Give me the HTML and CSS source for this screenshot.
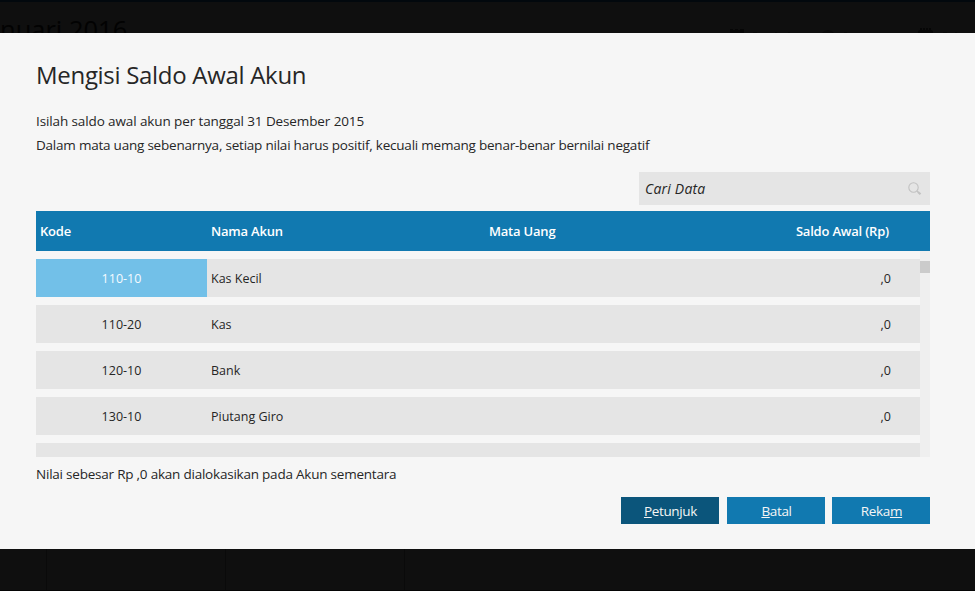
FILE: index.html
```html
<!DOCTYPE html>
<html lang="id">
<head>
    <meta charset="UTF-8">
    <meta name="viewport" content="width=device-width, initial-scale=1.0">
    <title>Mengisi Saldo Awal Akun</title>
    <link rel="stylesheet" href="styles.css">
</head>
<body>

<div id="backdrop">
    <div class="page-title">nuari 2016</div>
    <svg class="page-tools" width="245" height="8" viewBox="0 -3 245 8">
        <path d="M0 8V1h3v1h2V1h3v1h2V1h4v7z"/>
        <path class="faint" d="M23 4h4v2h-4zM45 4h2v2h-2zM58 4h2v2h-2zM92 5q6-6 12 0M114 4h3v2h-3z"/>
        <path d="M188 8V3l2-1V0h2v2h1V0h2v2h1V0h2v2h1V0h2v2l2 1v5z"/>
        <path class="faint" d="M213 4h4v2h-4zM225 4h2v2h-2z"/>
    </svg>
</div>

<div id="dialog">
    <h1>Mengisi Saldo Awal Akun</h1>
    <p class="info first">Isilah saldo awal akun per tanggal 31 Desember 2015</p>
    <p class="info second">Dalam mata uang sebenarnya, setiap nilai harus positif, kecuali memang benar-benar bernilai negatif</p>

    <div class="search">
        <span>Cari Data</span>
        <svg width="14" height="14" viewBox="0 0 14 14">
            <circle cx="5.5" cy="5.5" r="4.7"/>
            <path d="M9 9l1.5 1.5"/>
            <path class="handle" d="M10 10l2.5 2.3"/>
        </svg>
    </div>

    <div class="row head">
        <div class="kode">Kode</div>
        <div class="nama">Nama Akun</div>
        <div class="mata">Mata Uang</div>
        <div class="saldo">Saldo Awal (Rp)</div>
    </div>

    <div class="list">
        <div class="rows">
            <div class="row">
                <div class="kode selected">110-10</div>
                <div class="nama">Kas Kecil</div>
                <div class="mata"></div>
                <div class="saldo">,0</div>
            </div>
            <div class="row">
                <div class="kode">110-20</div>
                <div class="nama">Kas</div>
                <div class="mata"></div>
                <div class="saldo">,0</div>
            </div>
            <div class="row">
                <div class="kode">120-10</div>
                <div class="nama">Bank</div>
                <div class="mata"></div>
                <div class="saldo">,0</div>
            </div>
            <div class="row">
                <div class="kode">130-10</div>
                <div class="nama">Piutang Giro</div>
                <div class="mata"></div>
                <div class="saldo">,0</div>
            </div>
            <div class="row"></div>
        </div>
        <div class="scrollbar"><div class="thumb"></div></div>
    </div>

    <p class="note">Nilai sebesar Rp ,0 akan dialokasikan pada Akun sementara</p>

    <div class="buttons">
        <button class="active"><u>P</u>etunjuk</button>
        <button><u>B</u>atal</button>
        <button class="last">Reka<u>m</u></button>
    </div>
</div>

<div id="bottom">
    <div></div>
    <div></div>
    <div></div>
</div>

</body>
</html>
```
FILE: styles.css
```css
* {
    box-sizing: border-box;
}

body {
    font-family: 'Open Sans', 'Noto Sans', sans-serif;
    font-size: 13.5px;
    margin: 0;
    height: 591px;
    overflow: hidden;
    background-color: #0f0f0f;
    color: #262626;
}

/* darkened page behind the dialog */
#backdrop {
    height: 33px;
    border-top: 2px solid #02080d;
    display: flex;
    justify-content: space-between;
    align-items: flex-end;
    overflow: hidden;
}

.page-title {
    height: 18px;
    font-size: 25.5px;
    line-height: 28px;
    color: #020202;
    white-space: nowrap;
}

.page-tools {
    fill: #060606;
}

.page-tools .faint {
    fill: #0a0a0a;
}

#dialog {
    height: 516px;
    padding: 26px 45px 0 36px;
    background-color: #f6f6f6;
}

h1 {
    margin: 0;
    font-size: 24px;
    font-weight: normal;
    line-height: 32px;
    letter-spacing: -0.3px;
}

p {
    margin: 0;
    line-height: 24px;
    white-space: nowrap;
}

.info.first {
    margin-top: 18px;
    letter-spacing: -0.11px;
}

.info.second {
    letter-spacing: -0.22px;
}

.search {
    width: 291px;
    height: 33px;
    margin: 15px 0 6px auto;
    padding: 0 8px 0 6px;
    background-color: #e5e5e5;
    display: flex;
    align-items: center;
    justify-content: space-between;
    font-size: 14px;
    font-style: italic;
    letter-spacing: 0.2px;
}

.search svg {
    fill: none;
    stroke: #c2c2c2;
    stroke-width: 1.1;
}

.search .handle {
    stroke-width: 2.2;
}

.row {
    display: grid;
    grid-template-columns: 171px 278px 1fr 200px;
    height: 38px;
    line-height: 39px;
    margin-bottom: 8px;
    background-color: #e5e5e5;
    font-size: 12.5px;
}

.row.head {
    height: 40px;
    line-height: 40px;
    margin: 0;
    background-color: #1179b0;
    color: #fff;
    font-size: 13px;
    font-weight: 600;
    letter-spacing: -0.2px;
}

.nama,
.mata,
.head .kode {
    padding-left: 4px;
}

.kode {
    height: 38px;
    text-align: center;
}

.head .kode {
    text-align: left;
}

.selected {
    background-color: #72c0e8;
    color: #f5fbff;
}

.saldo {
    text-align: right;
    padding-right: 29px;
}

.head .saldo {
    padding-right: 41px;
}

.list {
    height: 206px;
    display: flex;
    overflow: hidden;
}

.rows {
    flex: 1;
    padding-top: 8px;
}

.scrollbar {
    width: 10px;
    padding-top: 10px;
    background-color: #efefef;
}

.thumb {
    height: 12px;
    background-color: #cbcbcb;
}

.note {
    margin-top: 5px;
    letter-spacing: -0.22px;
}

.buttons {
    display: flex;
    justify-content: flex-end;
    gap: 8px;
    margin-top: 11px;
}

button {
    width: 98px;
    height: 27px;
    border: 0;
    padding: 0 0 0 1px;
    background-color: #1179b0;
    color: #f5f5f5;
    font: inherit;
    letter-spacing: -0.35px;
}

button.active {
    background-color: #0b557b;
}

button.last {
    margin-left: -1px;
}

/* grid lines of the page under the overlay */
#bottom {
    height: 42px;
    display: flex;
    border-bottom: 1px solid #050505;
}

#bottom div {
    width: 179px;
    border-right: 1px solid #0a0a0a;
}

#bottom div:first-child {
    width: 47px;
}
```
